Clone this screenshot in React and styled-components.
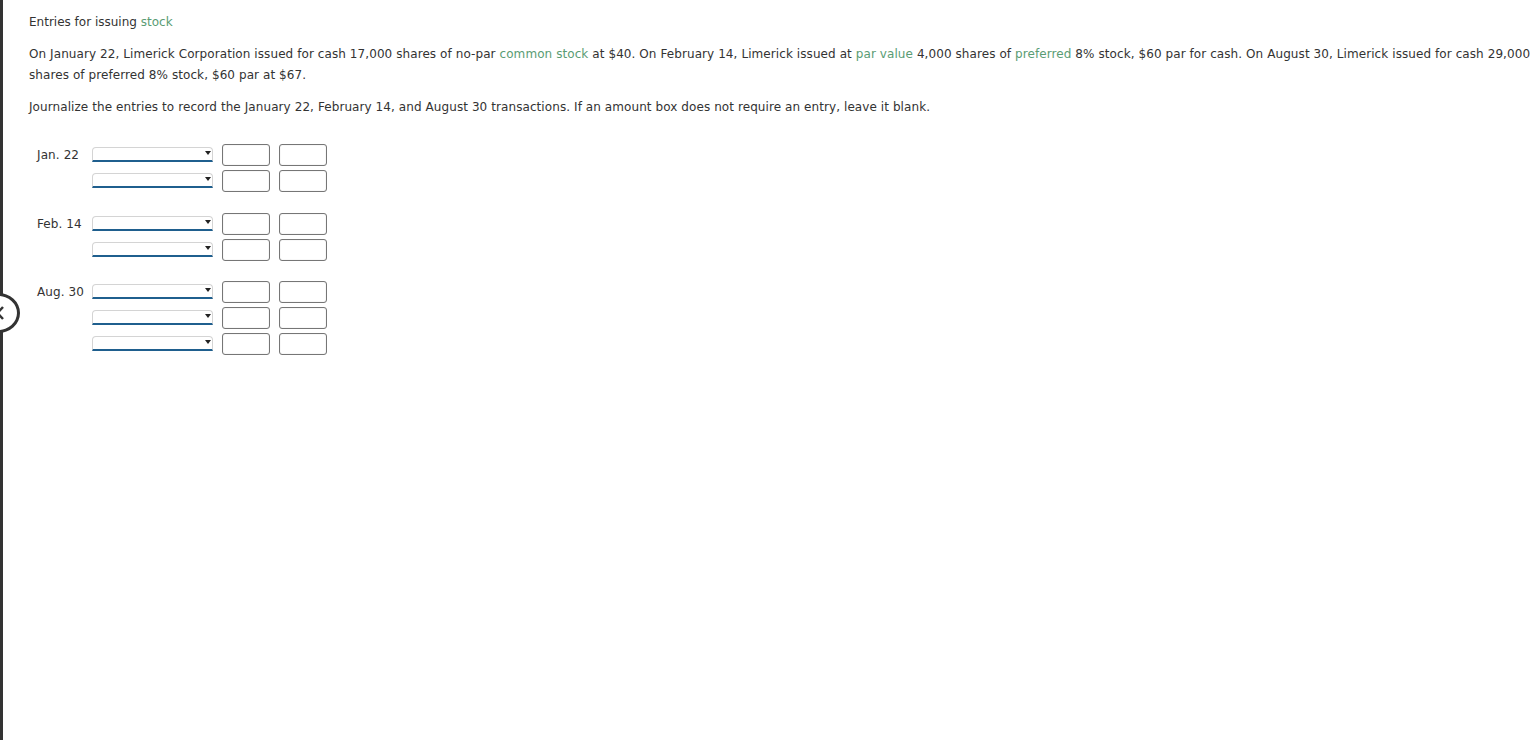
import React from "react";
import styled, { createGlobalStyle } from "styled-components";

const Global = createGlobalStyle`
  html, body { margin: 0; padding: 0; background: #fff; }
  body { font-family: "DejaVu Sans", Verdana, sans-serif; color: #333; overflow-x: hidden; }
`;

const Frame = styled.div`
  position: relative;
  min-height: 740px;
  box-sizing: border-box;
  border-left: 3px solid #333;
  padding: 13px 8px 0 26px;
`;

const Title = styled.p`
  margin: 0 0 13px;
  font-size: 12px;
  line-height: 18px;
`;

const Para = styled.p`
  margin: 0 0 11px;
  font-size: 12px;
  line-height: 21px;
  letter-spacing: 0.08px;
`;

const Term = styled.span`
  color: #5a9c74;
`;

const Journal = styled.div`
  display: flex;
  flex-direction: column;
  margin-top: 26px;
  padding-left: 8px;
`;

const Group = styled.div`
  display: flex;
  flex-direction: column;
  gap: 4px;
  margin-bottom: ${(p) => p.$after}px;
`;

const Row = styled.div`
  display: flex;
  align-items: center;
  height: 22px;
`;

const DateLabel = styled.span`
  width: 55px;
  font-size: 12px;
  letter-spacing: 0.1px;
`;

const Select = styled.div`
  position: relative;
  box-sizing: border-box;
  width: 121px;
  height: 15px;
  margin-right: 9px;
  background: #fff;
  border: 1px solid #d4d4d4;
  border-bottom: 2px solid #1f5f8e;
  border-radius: 4px 4px 0 0;
  margin-top: -1px;
  &::after {
    content: "";
    position: absolute;
    right: 1px;
    top: 3px;
    border-left: 3.5px solid transparent;
    border-right: 3.5px solid transparent;
    border-top: 4px solid #222;
  }
`;

const Amount = styled.div`
  box-sizing: border-box;
  width: 48px;
  height: 22px;
  margin-right: 9px;
  border: 1px solid #767676;
  border-radius: 3px;
  background: #fff;
  box-shadow: inset 0 0 1px #bbb;
`;

const Nav = styled.div`
  position: absolute;
  left: -27px;
  top: 293px;
  width: 34px;
  height: 34px;
  border: 3px solid #333;
  border-radius: 50%;
  background: #fff;
  display: flex;
  align-items: center;
  justify-content: center;
  padding-left: 4px;
  box-sizing: content-box;
`;

const groups = [
  { date: "Jan. 22", rows: 2, after: 21 },
  { date: "Feb. 14", rows: 2, after: 20 },
  { date: "Aug. 30", rows: 3, after: 0 },
];

export default function App() {
  return (
    <>
      <Global />
      <Frame>
        <Nav>
          <svg width="8" height="14" viewBox="0 0 8 14">
            <path d="M7 1 L1.5 7 L7 13" fill="none" stroke="#333" strokeWidth="2.5" />
          </svg>
        </Nav>
        <Title>
          Entries for issuing <Term>stock</Term>
        </Title>
        <Para>
          On January 22, Limerick Corporation issued for cash 17,000 shares of no-par{" "}
          <Term>common stock</Term> at $40. On February 14, Limerick issued at{" "}
          <Term>par value</Term> 4,000 shares of <Term>preferred</Term> 8% stock, $60 par
          for cash. On August 30, Limerick issued for cash 29,000 shares of preferred 8%
          stock, $60 par at $67.
        </Para>
        <Para>
          Journalize the entries to record the January 22, February 14, and August 30
          transactions. If an amount box does not require an entry, leave it blank.
        </Para>
        <Journal>
          {groups.map((g) => (
            <Group key={g.date} $after={g.after}>
              {Array.from({ length: g.rows }).map((_, i) => (
                <Row key={i}>
                  <DateLabel>{i === 0 ? g.date : ""}</DateLabel>
                  <Select />
                  <Amount />
                  <Amount />
                </Row>
              ))}
            </Group>
          ))}
        </Journal>
      </Frame>
    </>
  );
}
